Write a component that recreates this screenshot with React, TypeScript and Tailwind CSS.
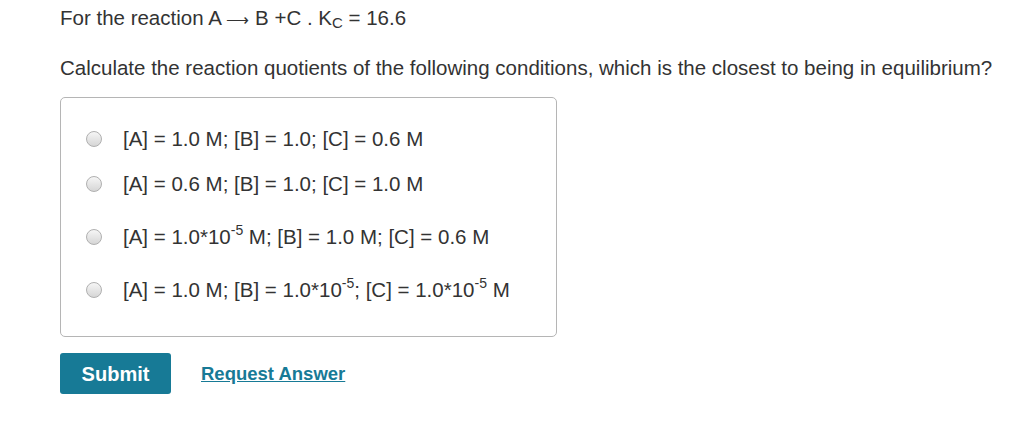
import React from "react";

function Radio() {
  return (
    <span className="inline-block w-[16px] h-[16px] rounded-full border border-[#b0b0b0] bg-gradient-to-b from-[#f6f6f6] to-[#d6d6d6] shrink-0" />
  );
}

function Sup({ children }: { children: React.ReactNode }) {
  return <sup className="text-[14px] relative top-[-9px] align-baseline">{children}</sup>;
}

export default function App() {
  const options: React.ReactNode[] = [
    <>[A] = 1.0 M; [B] = 1.0; [C] = 0.6 M</>,
    <>[A] = 0.6 M; [B] = 1.0; [C] = 1.0 M</>,
    <>
      [A] = 1.0*10<Sup>-5</Sup> M; [B] = 1.0 M; [C] = 0.6 M
    </>,
    <>
      [A] = 1.0 M; [B] = 1.0*10<Sup>-5</Sup>; [C] = 1.0*10<Sup>-5</Sup> M
    </>,
  ];
  const heights = ["h-[46px]", "h-[44px]", "h-[62px]", "h-[44px]"];
  return (
    <div
      className="w-[1024px] h-[430px] bg-white text-[#333] pl-[60px] pt-[5px]"
      style={{ fontFamily: '"Liberation Sans", Arial, sans-serif' }}
    >
      <div className="text-[20.5px] h-[30px] leading-[26px] whitespace-nowrap">
        For the reaction A <span className="text-[16px]">⟶</span> B +C . K
        <sub className="text-[15px] relative top-[3px] align-baseline">C</sub> = 16.6
      </div>
      <div className="text-[20.5px] mt-[20px] leading-[26px] whitespace-nowrap">
        Calculate the reaction quotients of the following conditions, which is the closest to being in equilibrium?
      </div>
      <div className="mt-[16px] w-[497px] h-[240px] border border-[#b5b5b5] rounded-[5px] pt-[18px] pl-[25px]">
        {options.map((o, i) => (
          <div key={i} className={`flex items-center ${heights[i]}`}>
            <Radio />
            <span className="ml-[21px] text-[20.5px] leading-[24px] whitespace-nowrap">{o}</span>
          </div>
        ))}
      </div>
      <div className="flex items-center mt-[16px]">
        <button className="w-[111px] h-[41px] bg-[#177a96] rounded-[3px] text-white font-bold text-[20px]">
          Submit
        </button>
        <a className="ml-[30px] text-[#177a96] font-bold text-[18.5px] underline">Request Answer</a>
      </div>
    </div>
  );
}
